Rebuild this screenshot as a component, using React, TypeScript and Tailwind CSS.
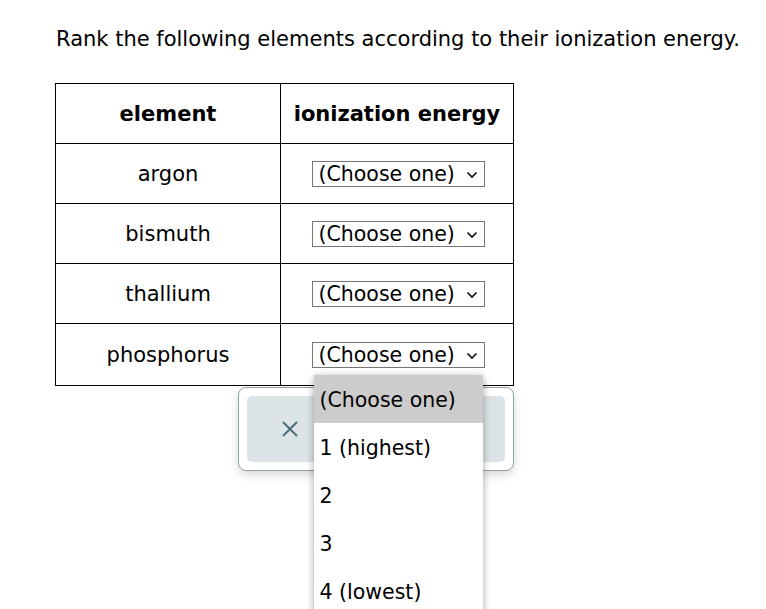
import React from 'react';

const rows = ['argon', 'bismuth', 'thallium', 'phosphorus'];
const options = ['(Choose one)', '1 (highest)', '2', '3', '4 (lowest)'];

const Chevron = () => (
  <svg width="12" height="8" viewBox="0 0 12 8" className="absolute right-[6px] top-[9px]">
    <path d="M1.5 1.5l4.5 4.5 4.5-4.5" fill="none" stroke="#111" strokeWidth="1.7" />
  </svg>
);

const FakeSelect: React.FC<{ open?: boolean }> = ({ open }) => (
  <div className="relative mx-auto w-[173px] h-[26px] border border-[#767676] bg-white text-left">
    <span className="absolute left-[6px] top-[0px] text-[20.5px] leading-[24px] text-black whitespace-nowrap">(Choose one)</span>
    <Chevron />
    {open && (
      <div className="absolute left-[1px] top-[32px] w-[169px] bg-white shadow-[0_2px_8px_rgba(0,0,0,0.35)] z-20">
        {options.map((o, i) => (
          <div
            key={o}
            className={`h-[48px] flex items-center pl-[6px] pt-[4px] text-[20.5px] text-black whitespace-nowrap ${i === 0 ? 'bg-[#cccccc]' : 'bg-white'}`}
          >
            {o}
          </div>
        ))}
      </div>
    )}
  </div>
);

export default function App() {
  return (
    <div className="w-[766px] h-[609px] overflow-hidden bg-white text-black" style={{ fontFamily: '"DejaVu Sans", Verdana, sans-serif' }}>
      <div className="pt-[25px] pl-[56px] text-[21px] leading-[28px] whitespace-nowrap">
        Rank the following elements according to their ionization energy.
      </div>

      <div className="relative ml-[55px] mt-[30px]">
        <table className="border-collapse text-[21px]">
          <thead>
            <tr className="h-[60px]">
              <th className="w-[225px] border border-black font-bold pt-[3px]">element</th>
              <th className="w-[233px] border border-black font-bold pt-[3px]">ionization energy</th>
            </tr>
          </thead>
          <tbody>
            {rows.map((r, i) => (
              <tr key={r} className={i === rows.length - 1 ? 'h-[62px]' : 'h-[60px]'}>
                <td className="border border-black text-center pt-[3px]">{r}</td>
                <td className="border border-black text-center">
                  <div className="pl-[2px]">
                    <FakeSelect open={i === rows.length - 1} />
                  </div>
                </td>
              </tr>
            ))}
          </tbody>
        </table>

        <div className="ml-[183px] mt-[1px] w-[276px] h-[84px] rounded-[8px] border border-[#8fa3ab] bg-white p-[8px] shadow-[0_4px_10px_rgba(0,0,0,0.15)]">
          <div className="h-full rounded-[5px] bg-[#dce4e7] flex items-center pl-[34px]">
            <svg width="18" height="18" viewBox="0 0 18 18">
              <path d="M2 2l14 14M16 2L2 16" stroke="#4e6f79" strokeWidth="2" fill="none" />
            </svg>
          </div>
        </div>
      </div>
    </div>
  );
}
